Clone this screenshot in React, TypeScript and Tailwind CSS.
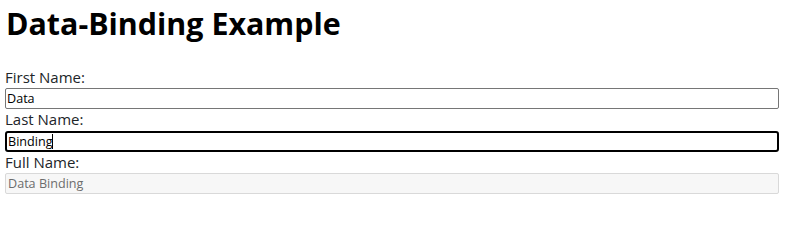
import { useState } from "react";

const font = { fontFamily: '"Open Sans", "Noto Sans", sans-serif' };

function Field({
  label,
  value,
  onChange,
  variant,
}: {
  label: string;
  value: string;
  onChange?: (v: string) => void;
  variant: "normal" | "focused" | "readonly";
}) {
  const box =
    variant === "focused"
      ? "border-2 border-black rounded-[3px] px-[1px] text-black"
      : variant === "readonly"
        ? "border border-[#d9d9d9] bg-[#f7f7f7] text-[#6d6d6d] rounded-[2px] px-[2px]"
        : "border border-[#767676] rounded-[2px] px-[1px] text-black";
  return (
    <div className="flex flex-col">
      <label className="text-[15px] leading-[21.33px] text-[#212529]">{label}</label>
      <div className="relative">
        <input
          className={`block w-full h-[21px] text-[12.6px] leading-[17px] outline-none ${box}`}
          value={value}
          readOnly={variant === "readonly" || !onChange}
          onChange={(e) => onChange?.(e.target.value)}
        />
        {variant === "focused" && (
          <span className="absolute left-[47px] top-[3px] h-[15px] w-px bg-black" />
        )}
      </div>
    </div>
  );
}

export default function App() {
  const [first, setFirst] = useState("Data");
  const [last, setLast] = useState("Binding");

  return (
    <div className="w-[787px] h-[210px] bg-white px-[5px]" style={font}>
      <h1 className="text-[30.4px] leading-[40px] font-bold text-black pt-[4px] mb-[23px] pl-[1px]">
        Data-Binding Example
      </h1>
      <div className="w-[774px] flex flex-col">
        <Field label="First Name:" value={first} onChange={setFirst} variant="normal" />
        <Field label="Last Name:" value={last} onChange={setLast} variant="focused" />
        <Field label="Full Name:" value={`${first} ${last}`} variant="readonly" />
      </div>
    </div>
  );
}
